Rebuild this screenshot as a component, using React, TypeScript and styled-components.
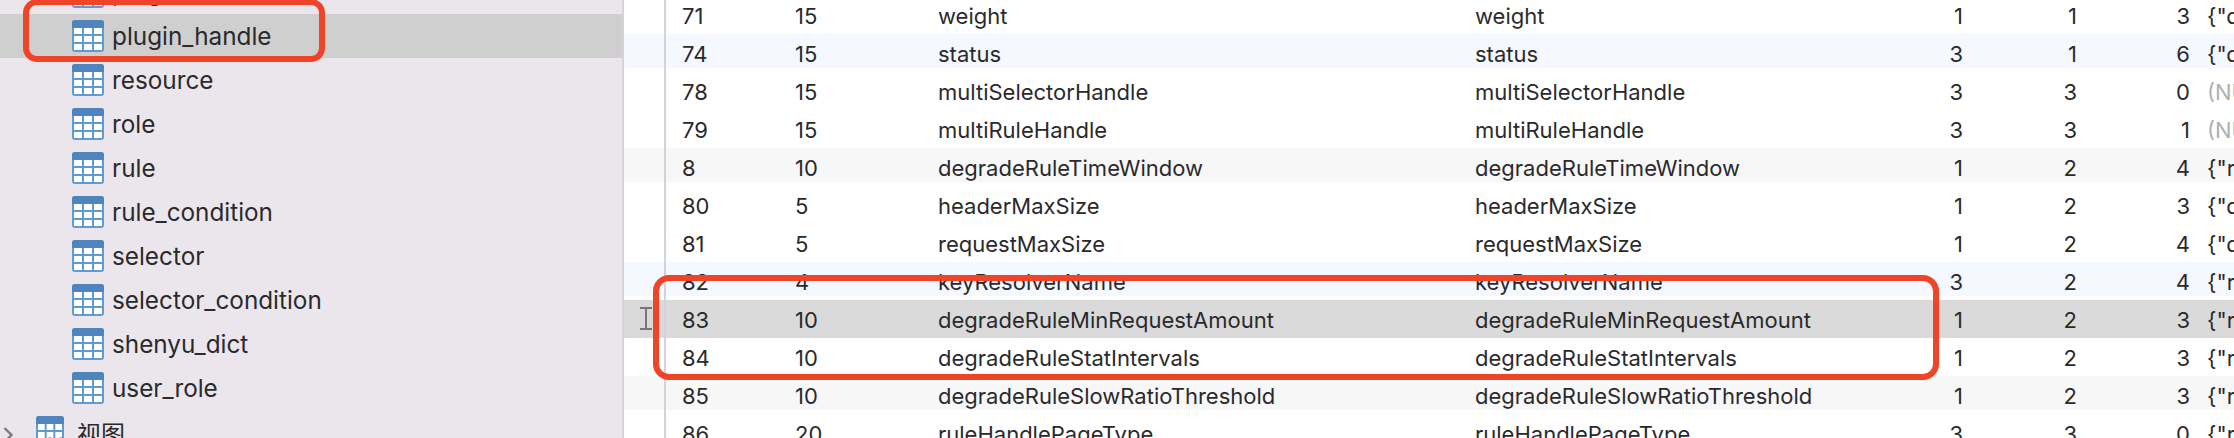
import React from 'react';
import styled, { createGlobalStyle } from 'styled-components';

const GlobalStyle = createGlobalStyle`
  html, body {
    margin: 0;
    padding: 0;
    background: #fff;
  }
  body {
    width: 2234px;
    height: 438px;
    overflow: hidden;
    font-family: Inter, "Liberation Sans", "Noto Sans CJK SC", sans-serif;
    color: #2a2a2c;
  }
`;

type FieldRow = {
  id: string;
  pluginId: string;
  field: string;
  dataType: string;
  type: string;
  sort: string;
  ext: string;
  isNull?: boolean;
  band?: 'blue' | 'gray';
  selected?: boolean;
};

const sidebarTables = [
  'plugin',
  'plugin_handle',
  'resource',
  'role',
  'rule',
  'rule_condition',
  'selector',
  'selector_condition',
  'shenyu_dict',
  'user_role',
];

const rows: FieldRow[] = [
  { id: '71', pluginId: '15', field: 'weight', dataType: '1', type: '1', sort: '3', ext: '{"d' },
  { id: '74', pluginId: '15', field: 'status', dataType: '3', type: '1', sort: '6', ext: '{"d', band: 'blue' },
  { id: '78', pluginId: '15', field: 'multiSelectorHandle', dataType: '3', type: '3', sort: '0', ext: '(NU', isNull: true },
  { id: '79', pluginId: '15', field: 'multiRuleHandle', dataType: '3', type: '3', sort: '1', ext: '(NU', isNull: true },
  { id: '8', pluginId: '10', field: 'degradeRuleTimeWindow', dataType: '1', type: '2', sort: '4', ext: '{"r', band: 'gray' },
  { id: '80', pluginId: '5', field: 'headerMaxSize', dataType: '1', type: '2', sort: '3', ext: '{"d' },
  { id: '81', pluginId: '5', field: 'requestMaxSize', dataType: '1', type: '2', sort: '4', ext: '{"d' },
  { id: '82', pluginId: '4', field: 'keyResolverName', dataType: '3', type: '2', sort: '4', ext: '{"r', band: 'blue' },
  { id: '83', pluginId: '10', field: 'degradeRuleMinRequestAmount', dataType: '1', type: '2', sort: '3', ext: '{"r', selected: true },
  { id: '84', pluginId: '10', field: 'degradeRuleStatIntervals', dataType: '1', type: '2', sort: '3', ext: '{"r' },
  { id: '85', pluginId: '10', field: 'degradeRuleSlowRatioThreshold', dataType: '1', type: '2', sort: '3', ext: '{"r', band: 'gray' },
  { id: '86', pluginId: '20', field: 'ruleHandlePageType', dataType: '3', type: '3', sort: '0', ext: '{"r' },
];

const bandColors = { blue: '#f5f8fe', gray: '#f7f7f7' };

const GridCells: React.FC<{ width: number }> = ({ width }) => {
  const cellWidth = (width - 8) / 3;
  return (
    <>
      {[8, 16, 24].map((y) =>
        [0, 1, 2].map((i) => (
          <rect
            key={`${i}-${y}`}
            x={2 + i * (cellWidth + 2)}
            y={y}
            width={cellWidth}
            height="6"
            fill="#fff"
          />
        ))
      )}
    </>
  );
};

const TableIcon: React.FC = () => (
  <svg width="32" height="32" viewBox="0 0 32 32" style={{ flex: 'none' }}>
    <rect width="32" height="32" rx="3" fill="#5f9bd3" />
    <path d="M0 8V3a3 3 0 0 1 3-3h26a3 3 0 0 1 3 3v5z" fill="#4f84bc" />
    <GridCells width={32} />
  </svg>
);

// view icon: narrower table with a pair of glasses over its lower corner
const ViewIcon: React.FC = () => (
  <svg width="30" height="32" viewBox="0 0 30 32" style={{ flex: 'none' }}>
    <rect width="28" height="32" rx="3" fill="#5f9bd3" />
    <path d="M0 8V3a3 3 0 0 1 3-3h22a3 3 0 0 1 3 3v5z" fill="#4f84bc" />
    <GridCells width={28} />
    <path d="M7 32v-8h23v8z" fill="#fff" />
    <circle cx="14" cy="27" r="4.5" fill="#fff" stroke="#2f2f31" strokeWidth="2" />
    <circle cx="25" cy="27" r="4.5" fill="#fff" stroke="#2f2f31" strokeWidth="2" />
  </svg>
);

const Page = styled.div`
  width: 2234px;
  height: 438px;
  display: flex;
  position: relative;
  overflow: hidden;
`;

const Sidebar = styled.aside`
  width: 622px;
  flex: none;
  background: #ebe6ec;
  border-right: 2px solid #d6d2d8;
  overflow: hidden;
`;

const SidebarList = styled.div`
  margin-top: -30px;
`;

const TreeRow = styled.div<{ $active?: boolean }>`
  height: 44px;
  display: flex;
  align-items: center;
  gap: 8px;
  padding-left: 72px;
  font-size: 24.3px;
  background: ${(p) => (p.$active ? '#cfcfcf' : 'transparent')};
`;

const GroupRow = styled.div`
  height: 44px;
  display: flex;
  align-items: center;
  gap: 11px;
  padding-left: 3px;
  font-size: 24px;
`;

const Chevron = styled.svg`
  margin-right: 12px;
  margin-top: 6px;
`;

const TablePane = styled.main`
  flex: 1;
  min-width: 0;
  overflow: hidden;
  position: relative;
`;

const Gutter = styled.div`
  position: absolute;
  left: 40px;
  top: 0;
  bottom: 0;
  width: 2px;
  background: #d5d2d8;
`;

const Rows = styled.div`
  margin-top: -4px;
`;

const Row = styled.div<{ $band?: 'blue' | 'gray'; $selected?: boolean }>`
  box-sizing: border-box;
  height: 38px;
  padding-top: 2px;
  display: grid;
  grid-template-columns: 58px 113px 143px 537px 374px 114px 114px 113px 17px 1fr;
  align-items: center;
  font-size: 22px;
  white-space: nowrap;
  background: ${(p) =>
    p.$selected
      ? '#dadada'
      : p.$band
        ? `linear-gradient(${bandColors[p.$band]}, ${bandColors[p.$band]}) top / 100% 34px no-repeat`
        : 'transparent'};
`;

const IdCell = styled.div`
  grid-column: 2;
`;

const NumberCell = styled.div`
  text-align: right;
`;

const ExtCell = styled.div<{ $null?: boolean }>`
  grid-column: 10;
  color: ${(p) => (p.$null ? '#b0b0b0' : 'inherit')};
`;

const Annotation = styled.div`
  position: absolute;
  border: 6px solid #ef4427;
  box-sizing: border-box;
`;

const PluginMark = styled(Annotation)`
  left: 23px;
  top: -1px;
  width: 302px;
  height: 63px;
  border-radius: 14px;
`;

const RowsMark = styled(Annotation)`
  left: 653px;
  top: 275px;
  width: 1286px;
  height: 105px;
  border-radius: 16px;
`;

const Cursor = styled.svg`
  position: absolute;
  left: 640px;
  top: 307px;
`;

export default function App() {
  return (
    <Page>
      <GlobalStyle />
      <Sidebar>
        <SidebarList>
          {sidebarTables.map((name) => (
            <TreeRow key={name} $active={name === 'plugin_handle'}>
              <TableIcon />
              {name}
            </TreeRow>
          ))}
          <GroupRow>
            <Chevron width="10" height="18" viewBox="0 0 10 18" fill="none">
              <path d="M1.5 2l7 7-7 7" stroke="#7d7a80" strokeWidth="2.4" />
            </Chevron>
            <ViewIcon />
            <span>视图</span>
          </GroupRow>
        </SidebarList>
      </Sidebar>
      <TablePane>
        <Gutter />
        <Rows>
          {rows.map((r) => (
            <Row key={r.id} $band={r.band} $selected={r.selected}>
              <IdCell>{r.id}</IdCell>
              <div>{r.pluginId}</div>
              <div>{r.field}</div>
              <div>{r.field}</div>
              <NumberCell>{r.dataType}</NumberCell>
              <NumberCell>{r.type}</NumberCell>
              <NumberCell>{r.sort}</NumberCell>
              <ExtCell $null={r.isNull}>{r.ext}</ExtCell>
            </Row>
          ))}
        </Rows>
      </TablePane>
      <PluginMark />
      <RowsMark />
      <Cursor width="12" height="23" viewBox="0 0 12 23" fill="none">
        <path d="M0 1h12M0 22h12M6 1v21" stroke="#777" strokeWidth="2" />
      </Cursor>
    </Page>
  );
}
